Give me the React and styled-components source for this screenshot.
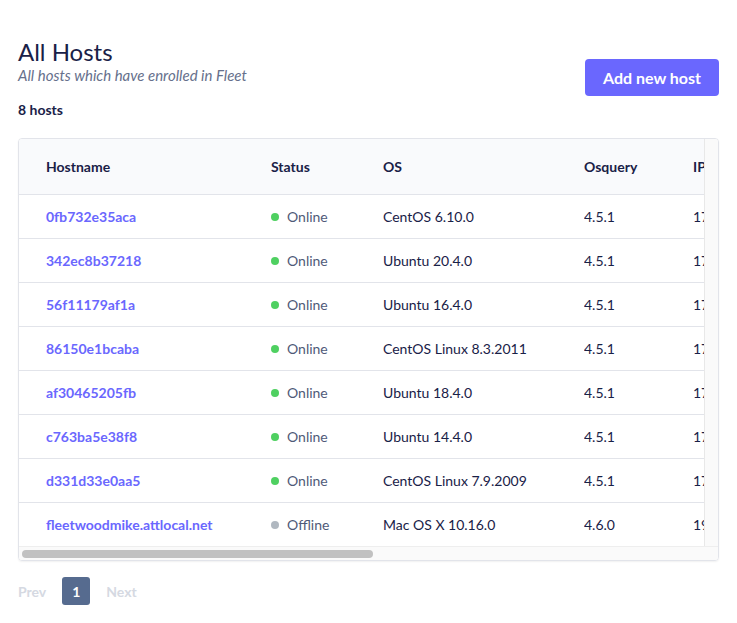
import React from 'react';
import styled, { createGlobalStyle } from 'styled-components';

const GlobalStyle = createGlobalStyle`
  body {
    margin: 0;
    background: #fff;
    font-family: Lato, "Noto Sans", "Liberation Sans", sans-serif;
    color: #192147;
  }
`;

const Page = styled.div`
  padding: 37px 18px 18px 18px;
  width: 737px;
  box-sizing: border-box;
`;

const Header = styled.div`
  display: flex;
  justify-content: space-between;
  align-items: flex-start;
`;

const TitleBlock = styled.div`
  display: flex;
  flex-direction: column;
`;

const Title = styled.h1`
  margin: 0;
  font-size: 24px;
  line-height: 30px;
  font-weight: 400;
  color: #192147;
`;

const Subtitle = styled.p`
  margin: -2px 0 0;
  font-size: 15px;
  line-height: 20px;
  font-style: italic;
  color: #66708c;
`;

const Count = styled.div`
  margin-top: 15px;
  font-size: 14px;
  line-height: 20px;
  font-weight: 700;
`;

const AddButton = styled.button`
  margin-top: 22px;
  height: 37px;
  padding: 0 18px;
  border: none;
  border-radius: 4px;
  background: #6a67fe;
  color: #fff;
  font-family: inherit;
  font-size: 16px;
  font-weight: 700;
  cursor: pointer;
`;

const Card = styled.div`
  margin-top: 18px;
  border: 1px solid #e2e4ea;
  border-radius: 4px;
  box-shadow: 0 1px 2px rgba(0, 0, 0, 0.06);
  display: grid;
  grid-template-columns: 1fr 14px;
  grid-template-rows: auto 14px;
  overflow: hidden;
`;

const Viewport = styled.div`
  overflow: hidden;
`;

const VTrack = styled.div`
  background: #fafafa;
  border-left: 1px solid #e8e8e8;
`;

const HTrack = styled.div`
  grid-column: 1 / 3;
  background: #fafafa;
  border-top: 1px solid #eeeeee;
  display: flex;
  align-items: center;
  padding: 0 3px;
`;

const Thumb = styled.div`
  width: 351px;
  height: 8px;
  border-radius: 4px;
  background: #c1c1c1;
`;

const Table = styled.table`
  width: 1340px;
  border-collapse: collapse;
  table-layout: fixed;
  font-size: 14px;
`;

const Th = styled.th`
  height: 55px;
  padding: 0 0 0 ${(p) => (p.$first ? '27px' : '0')};
  text-align: left;
  font-weight: 700;
  background: #f9fafc;
  border-bottom: 1px solid #e2e4ea;
  white-space: nowrap;
`;

const Td = styled.td`
  height: 43px;
  padding: 0 0 0 ${(p) => (p.$first ? '27px' : '0')};
  border-bottom: ${(p) => (p.$last ? 'none' : '1px solid #e2e4ea')};
  white-space: nowrap;
  overflow: hidden;
  color: #192147;
`;

const HostLink = styled.a`
  color: #6a67fe;
  font-weight: 700;
  text-decoration: none;
`;

const Status = styled.div`
  display: flex;
  align-items: center;
  gap: 8px;
  color: #4f5a78;
`;

const Dot = styled.span`
  width: 8px;
  height: 8px;
  border-radius: 50%;
  background: ${(p) => (p.$online ? '#4fd061' : '#b0b8c0')};
`;

const Pager = styled.div`
  margin-top: 16px;
  display: flex;
  align-items: center;
  gap: 16px;
  font-size: 14px;
  font-weight: 700;
`;

const PageLink = styled.span`
  color: #d5d9e2;
`;

const PageNum = styled.span`
  width: 28px;
  height: 28px;
  border-radius: 3px;
  background: #566b8f;
  color: #fff;
  display: flex;
  align-items: center;
  justify-content: center;
`;

const hosts = [
  ['0fb732e35aca', true, 'CentOS 6.10.0', '4.5.1', '172.18.0.2'],
  ['342ec8b37218', true, 'Ubuntu 20.4.0', '4.5.1', '172.18.0.3'],
  ['56f11179af1a', true, 'Ubuntu 16.4.0', '4.5.1', '172.18.0.4'],
  ['86150e1bcaba', true, 'CentOS Linux 8.3.2011', '4.5.1', '172.18.0.5'],
  ['af30465205fb', true, 'Ubuntu 18.4.0', '4.5.1', '172.18.0.6'],
  ['c763ba5e38f8', true, 'Ubuntu 14.4.0', '4.5.1', '172.18.0.7'],
  ['d331d33e0aa5', true, 'CentOS Linux 7.9.2009', '4.5.1', '172.18.0.8'],
  ['fleetwoodmike.attlocal.net', false, 'Mac OS X 10.16.0', '4.6.0', '192.168.1.5'],
];

export default function App() {
  return (
    <Page>
      <GlobalStyle />
      <Header>
        <TitleBlock>
          <Title>All Hosts</Title>
          <Subtitle>All hosts which have enrolled in Fleet</Subtitle>
          <Count>8 hosts</Count>
        </TitleBlock>
        <AddButton>Add new host</AddButton>
      </Header>
      <Card>
        <Viewport>
          <Table>
            <colgroup>
              <col style={{ width: 252 }} />
              <col style={{ width: 112 }} />
              <col style={{ width: 201 }} />
              <col style={{ width: 109 }} />
              <col style={{ width: 160 }} />
              <col />
            </colgroup>
            <thead>
              <tr>
                <Th $first>Hostname</Th>
                <Th>Status</Th>
                <Th>OS</Th>
                <Th>Osquery</Th>
                <Th>IPv4</Th>
                <Th>Last fetched</Th>
              </tr>
            </thead>
            <tbody>
              {hosts.map(([name, online, os, ver, ip], i) => {
                const last = i === hosts.length - 1;
                return (
                  <tr key={name}>
                    <Td $first $last={last}>
                      <HostLink href="#">{name}</HostLink>
                    </Td>
                    <Td $last={last}>
                      <Status>
                        <Dot $online={online} />
                        {online ? 'Online' : 'Offline'}
                      </Status>
                    </Td>
                    <Td $last={last}>{os}</Td>
                    <Td $last={last}>{ver}</Td>
                    <Td $last={last}>{ip}</Td>
                    <Td $last={last}>a few seconds ago</Td>
                  </tr>
                );
              })}
            </tbody>
          </Table>
        </Viewport>
        <VTrack />
        <HTrack>
          <Thumb />
        </HTrack>
      </Card>
      <Pager>
        <PageLink>Prev</PageLink>
        <PageNum>1</PageNum>
        <PageLink>Next</PageLink>
      </Pager>
    </Page>
  );
}
